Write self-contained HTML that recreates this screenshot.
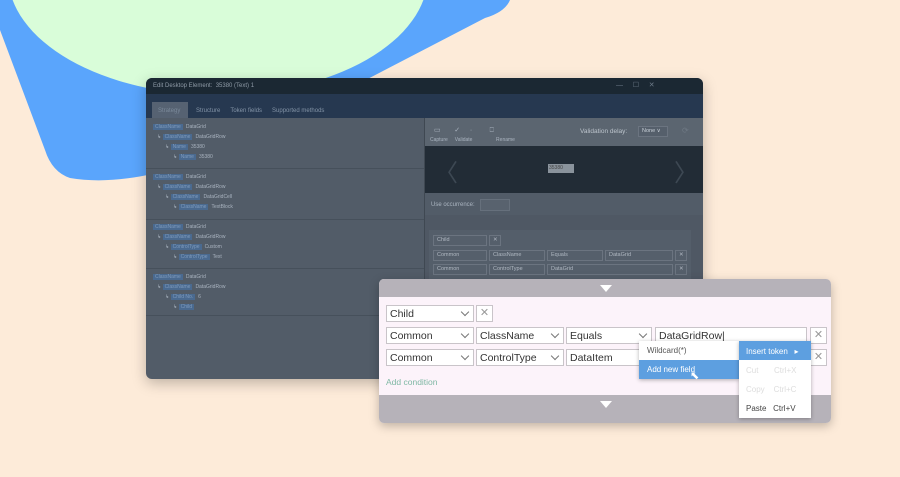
<!DOCTYPE html>
<html><head><meta charset="utf-8"><style>
*{margin:0;padding:0;box-sizing:border-box}
body{width:900px;height:477px;overflow:hidden;background:#fdebd9;font-family:"Liberation Sans",sans-serif;position:relative}
.a{position:absolute}
.dlg{left:146px;top:78px;width:557px;height:301px;border-radius:6px;overflow:hidden;background:#525c68;box-shadow:0 4px 14px rgba(0,0,0,.25)}
.t{font-size:5px;color:#aab4c0;position:absolute;white-space:nowrap}
.tag{background:#4a6a90;color:#7f9bbd;padding:0 2px;margin-right:3px}
.sel{position:absolute;height:11px;border:1px solid #6b7480;background:#555f6b;font-size:5.5px;color:#b0b8c2;padding:1px 3px}
.pop{left:379px;top:279px;width:452px;height:144px;border-radius:5px;overflow:hidden;background:#fcf3fa;box-shadow:0 3px 10px rgba(0,0,0,.25)}
.f{position:absolute;height:17px;border:1px solid #c9c4c9;background:#fff;font-size:10.5px;color:#333;padding:2px 3px;font-family:"Liberation Sans",sans-serif}
.f .v{position:absolute;right:5px;top:3px;width:6px;height:6px;border-right:1px solid #777;border-bottom:1px solid #777;transform:rotate(45deg)}
.x{position:absolute;width:17px;height:17px;border:1px solid #c9c4c9;background:#fff;color:#999;font-size:11px;text-align:center;line-height:15px}
.m{position:absolute;font-size:8px}
</style></head><body>
<svg class="a" style="left:0;top:0" width="560" height="200">
<path d="M0 0 L510 0 Q505 12 485 18 L250 140 Q140 190 70 178 Q52 172 45 150 L0 30 Z" fill="#5aa5fc"/>
<ellipse cx="218" cy="-25" rx="210" ry="120" fill="#d9fdd9"/>
</svg>
<div class="a dlg">
 <div class="a" style="left:0;top:0;width:557px;height:16px;background:#1b2833"></div>
 <div class="t" style="left:7px;top:5px;font-size:6px;color:#8e9aa6">Edit Desktop Element:&nbsp; 35380 (Text) 1</div>
 <div class="t" style="left:470px;top:3px;font-size:7px;color:#6d7a88">—&nbsp;&nbsp;&nbsp;&nbsp;&nbsp;☐&nbsp;&nbsp;&nbsp;&nbsp;&nbsp;✕</div>
 <div class="a" style="left:0;top:16px;width:557px;height:24px;background:#263850"></div>
 <div class="a" style="left:6px;top:24px;width:36px;height:16px;background:#566272"></div>
 <div class="t" style="left:12px;top:30px;font-size:6px;color:#7b8a9a">Strategy</div>
 <div class="t" style="left:50px;top:30px;font-size:6px;color:#8393a6">Structure&nbsp;&nbsp;&nbsp;&nbsp;&nbsp;&nbsp;Token fields&nbsp;&nbsp;&nbsp;&nbsp;&nbsp;&nbsp;Supported methods</div>
 <div class="t" style="left:7px;top:46px"><span class="tag">ClassName</span>DataGrid</div>
 <div class="t" style="left:11px;top:56px">↳ <span class="tag">ClassName</span>DataGridRow</div>
 <div class="t" style="left:19px;top:66px">↳ <span class="tag">Name</span>35380</div>
 <div class="t" style="left:27px;top:76px">↳ <span class="tag">Name</span>35380</div>
 <div class="a" style="left:0;top:90px;width:278px;height:1px;background:#46505b"></div>
 <div class="t" style="left:7px;top:96px"><span class="tag">ClassName</span>DataGrid</div>
 <div class="t" style="left:11px;top:106px">↳ <span class="tag">ClassName</span>DataGridRow</div>
 <div class="t" style="left:19px;top:116px">↳ <span class="tag">ClassName</span>DataGridCell</div>
 <div class="t" style="left:27px;top:126px">↳ <span class="tag">ClassName</span>TextBlock</div>
 <div class="a" style="left:0;top:141px;width:278px;height:1px;background:#46505b"></div>
 <div class="t" style="left:7px;top:146px"><span class="tag">ClassName</span>DataGrid</div>
 <div class="t" style="left:11px;top:156px">↳ <span class="tag">ClassName</span>DataGridRow</div>
 <div class="t" style="left:19px;top:166px">↳ <span class="tag">ControlType</span>Custom</div>
 <div class="t" style="left:27px;top:176px">↳ <span class="tag">ControlType</span>Text</div>
 <div class="a" style="left:0;top:190px;width:278px;height:1px;background:#46505b"></div>
 <div class="t" style="left:7px;top:196px"><span class="tag">ClassName</span>DataGrid</div>
 <div class="t" style="left:11px;top:206px">↳ <span class="tag">ClassName</span>DataGridRow</div>
 <div class="t" style="left:19px;top:216px">↳ <span class="tag">Child No.</span>6</div>
 <div class="t" style="left:27px;top:226px">↳ <span class="tag">Child</span></div>
 <div class="a" style="left:0;top:237px;width:278px;height:1px;background:#46505b"></div>
 <div class="a" style="left:278px;top:40px;width:1px;height:261px;background:#3f4852"></div>
 <div class="a" style="left:279px;top:40px;width:278px;height:28px;background:#5b6570"></div>
 <div class="t" style="left:284px;top:59px">Capture&nbsp;&nbsp;&nbsp;&nbsp;&nbsp;Validate&nbsp;&nbsp;&nbsp;&nbsp;&nbsp;&nbsp;&nbsp;&nbsp;&nbsp;&nbsp;&nbsp;&nbsp;&nbsp;&nbsp;&nbsp;&nbsp;&nbsp;Rename</div>
 <div class="t" style="left:288px;top:48px;font-size:7px">▭&nbsp;&nbsp;&nbsp;&nbsp;&nbsp;&nbsp;&nbsp;✓&nbsp;&nbsp;&nbsp;&nbsp;&nbsp;·&nbsp;&nbsp;&nbsp;&nbsp;&nbsp;&nbsp;&nbsp;&nbsp;&nbsp;⎕</div>
 <div class="t" style="left:434px;top:50px;font-size:6.5px;color:#bcc4cc">Validation delay:</div>
 <div class="sel" style="left:492px;top:48px;width:30px;color:#c8d0d8">None ∨</div>
 <div class="t" style="left:536px;top:48px;font-size:8px;color:#6f7984">⟳</div>
 <div class="a" style="left:279px;top:68px;width:278px;height:47px;background:#222c36"></div>
 <div class="t" style="left:288px;top:75px;font-size:24px;color:#3d4853">〈</div>
 <div class="t" style="left:528px;top:75px;font-size:24px;color:#3d4853">〉</div>
 <div class="a" style="left:402px;top:86px;width:26px;height:9px;background:#8a939c;font-size:5px;color:#444;padding:1px">35380</div>
 <div class="a" style="left:279px;top:115px;width:278px;height:22px;background:#525c68"></div>
 <div class="t" style="left:285px;top:124px;font-size:6px">Use occurrence:</div>
 <div class="a" style="left:334px;top:121px;width:30px;height:12px;border:1px solid #66707c;background:#58626e"></div>
 <div class="a" style="left:279px;top:137px;width:278px;height:164px;background:#4f5864"></div>
 <div class="a" style="left:283px;top:152px;width:262px;height:149px;background:#545e6a"></div>
 <div class="sel" style="left:287px;top:157px;width:54px">Child</div><div class="sel" style="left:343px;top:157px;width:12px">✕</div>
 <div class="sel" style="left:287px;top:172px;width:54px">Common</div><div class="sel" style="left:343px;top:172px;width:56px">ClassName</div><div class="sel" style="left:401px;top:172px;width:56px">Equals</div><div class="sel" style="left:459px;top:172px;width:68px">DataGrid</div><div class="sel" style="left:529px;top:172px;width:12px">✕</div>
 <div class="sel" style="left:287px;top:186px;width:54px">Common</div><div class="sel" style="left:343px;top:186px;width:56px">ControlType</div><div class="sel" style="left:401px;top:186px;width:126px">DataGrid</div><div class="sel" style="left:529px;top:186px;width:12px">✕</div>
</div>
<div class="a pop">
 <div class="a" style="left:0;top:0;width:452px;height:18px;background:#b6b2b9"></div>
 <div class="a" style="left:221px;top:6px;width:0;height:0;border-left:6px solid transparent;border-right:6px solid transparent;border-top:7px solid #fff"></div>
 <div class="f" style="left:7px;top:26px;width:88px">Child<span class="v"></span></div>
 <div class="x" style="left:97px;top:26px">✕</div>
 <div class="f" style="left:7px;top:48px;width:88px">Common<span class="v"></span></div>
 <div class="f" style="left:97px;top:48px;width:88px">ClassName<span class="v"></span></div>
 <div class="f" style="left:187px;top:48px;width:86px">Equals<span class="v"></span></div>
 <div class="f" style="left:276px;top:48px;width:152px">DataGridRow|</div>
 <div class="x" style="left:431px;top:48px">✕</div>
 <div class="f" style="left:7px;top:70px;width:88px">Common<span class="v"></span></div>
 <div class="f" style="left:97px;top:70px;width:88px">ControlType<span class="v"></span></div>
 <div class="f" style="left:187px;top:70px;width:86px">DataItem</div>
 <div class="x" style="left:431px;top:70px">✕</div>
 <div class="a" style="left:7px;top:98px;font-size:8.5px;color:#7fb8a4">Add condition</div>
 <div class="a" style="left:0;top:116px;width:452px;height:28px;background:#b6b2b9"></div>
 <div class="a" style="left:221px;top:122px;width:0;height:0;border-left:6px solid transparent;border-right:6px solid transparent;border-top:7px solid #fff"></div>
 <div class="a" style="left:260px;top:62px;width:100px;height:38px;background:#fff;box-shadow:0 1px 4px rgba(0,0,0,.3)"></div>
 <div class="m" style="left:268px;top:67px;color:#555">Wildcard(*)</div>
 <div class="a" style="left:260px;top:81px;width:100px;height:19px;background:#5d9fe0"></div>
 <div class="m" style="left:268px;top:86px;color:#fff">Add new field</div>
 <div class="m" style="left:311px;top:90px;color:#fff;font-size:11px">⬉</div>
 <div class="a" style="left:360px;top:62px;width:72px;height:77px;background:#fff;box-shadow:0 1px 4px rgba(0,0,0,.3)"></div>
 <div class="a" style="left:360px;top:62px;width:72px;height:19px;background:#5d9fe0"></div>
 <div class="m" style="left:367px;top:68px;color:#fff">Insert token&nbsp;&nbsp;&nbsp;▸</div>
 <div class="m" style="left:367px;top:87px;color:#ddd">Cut&nbsp;&nbsp;&nbsp;&nbsp;&nbsp;&nbsp;&nbsp;Ctrl+X</div>
 <div class="m" style="left:367px;top:106px;color:#ddd">Copy&nbsp;&nbsp;&nbsp;&nbsp;Ctrl+C</div>
 <div class="m" style="left:367px;top:125px;color:#444">Paste&nbsp;&nbsp;&nbsp;Ctrl+V</div>
</div>
</body></html>
